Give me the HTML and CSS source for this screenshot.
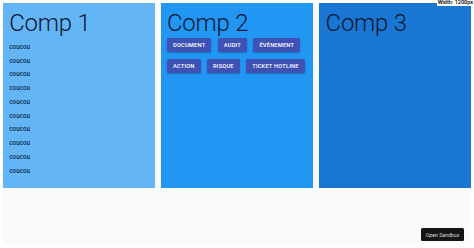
FILE: index.html
```html
<!DOCTYPE html>
<html>
<head>
<meta charset="utf-8">
<link rel="stylesheet" href="styles.css">
</head>
<body>
<div class="page">
  <div class="row">
    <section class="panel p1">
      <h2 class="title">Comp 1</h2>
      <ul class="list">
        <li>coucou</li><li>coucou</li><li>coucou</li><li>coucou</li><li>coucou</li>
        <li>coucou</li><li>coucou</li><li>coucou</li><li>coucou</li><li>coucou</li>
      </ul>
    </section>
    <section class="panel p2">
      <h2 class="title">Comp 2</h2>
      <div class="buttons">
        <button class="btn">Document</button>
        <button class="btn">Audit</button>
        <button class="btn">Évènement</button>
        <button class="btn">Action</button>
        <button class="btn">Risque</button>
        <button class="btn">Ticket hotline</button>
      </div>
    </section>
    <section class="panel p3">
      <h2 class="title">Comp 3</h2>
    </section>
  </div>
</div>
<div class="width-label">Width: 1200px</div>
<button class="sandbox">Open Sandbox</button>
</body>
</html>
```
FILE: styles.css
```css
html, body {
  margin: 0;
  padding: 0;
  background: #ffffff;
  font-family: Roboto, "Liberation Sans", sans-serif;
}
.page {
  margin: 3px;
  height: 241px;
  background: #fafafa;
}
.row {
  display: flex;
  gap: 6px;
  height: 185px;
}
.panel {
  flex: 1;
  box-sizing: border-box;
  padding: 6.3px;
}
.p1 { background: #64b5f6; }
.p2 { background: #2196f3; }
.p3 { background: #1976d2; }
.title {
  margin: 0;
  font-size: 23.9px;
  line-height: 28.4px;
  font-weight: 300;
  color: #0a1630;
  letter-spacing: -0.2px;
}
.list {
  list-style: none;
  margin: 3px 0 0;
  padding: 0;
}
.list li {
  height: 13.8px;
  line-height: 13.8px;
  font-size: 6.3px;
  font-weight: 500;
  color: #0f2a4d;
}
.buttons {
  display: flex;
  flex-wrap: wrap;
  column-gap: 6.5px;
  row-gap: 7px;
  margin-top: 0.5px;
  width: 140px;
}
.btn {
  border: none;
  margin: 0;
  height: 14px;
  padding: 0 6px;
  min-width: 25px;
  background: #3f51b5;
  color: #ffffff;
  font-family: Roboto, "Liberation Sans", sans-serif;
  font-size: 5.75px;
  font-weight: 500;
  text-transform: uppercase;
  letter-spacing: 0.16px;
  border-radius: 1.5px;
  box-shadow: 0 1px 2px rgba(0,0,0,0.25);
}
.width-label {
  position: absolute;
  top: 0;
  right: 0;
  padding: 0 1px;
  font-size: 5.5px;
  line-height: 5.5px;
  font-weight: 500;
  color: #000;
  background: #ffffff;
}
.sandbox {
  position: absolute;
  left: 421px;
  top: 228px;
  width: 43px;
  height: 13px;
  padding: 0;
  border: none;
  border-radius: 1.5px;
  background: #151515;
  color: #d8d8d8;
  font-family: Roboto, "Liberation Sans", sans-serif;
  font-size: 5.2px;
}
```
